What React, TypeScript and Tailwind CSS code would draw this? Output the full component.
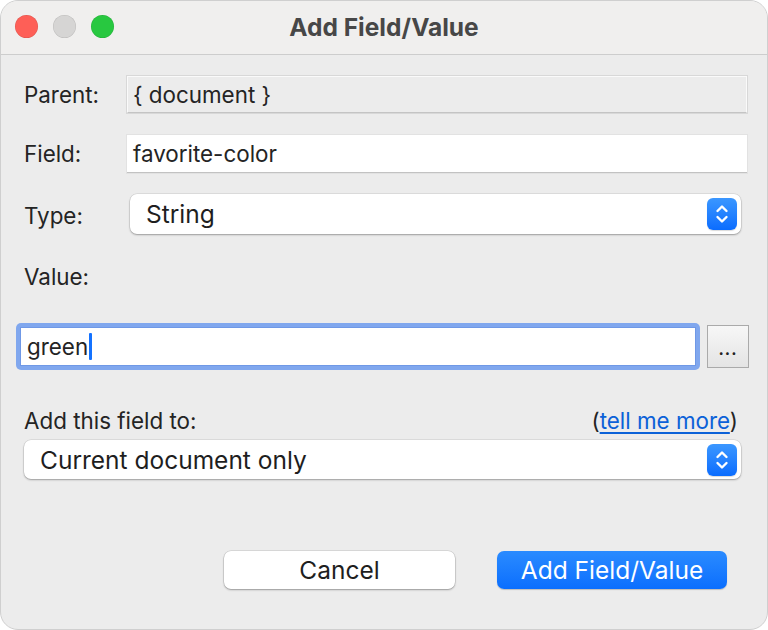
import React from 'react';

function Stepper() {
  return (
    <div className="flex h-[32px] w-[30px] items-center justify-center rounded-[6px] bg-gradient-to-b from-[#3b97ff] to-[#0a6cfe] shadow-[0_1px_1px_rgba(0,0,0,0.15)]">
      <svg width="14" height="22" viewBox="0 0 14 22" fill="none" stroke="white" strokeWidth="2.4" strokeLinecap="round" strokeLinejoin="round">
        <path d="M2.5 8 L7 3.5 L11.5 8" />
        <path d="M2.5 14 L7 18.5 L11.5 14" />
      </svg>
    </div>
  );
}

function PopUp({ label, className }: { label: string; className: string }) {
  return (
    <div
      className={`flex items-center justify-between rounded-[7px] bg-white pr-[4px] shadow-[0_0_0_0.5px_rgba(0,0,0,0.12),0_1px_2px_rgba(0,0,0,0.3)] ${className}`}
    >
      <span className="text-[24.5px] text-[#1e1e1e]">{label}</span>
      <Stepper />
    </div>
  );
}

export default function App() {
  return (
    <div className="h-[630px] w-[768px] bg-white" style={{ fontFamily: 'Inter, "Noto Sans", sans-serif' }}>
      <div className="flex h-[630px] w-[768px] flex-col overflow-hidden rounded-[18px] border border-[#cfcfcf] bg-[#ececec]">
        {/* Title bar */}
        <div className="relative flex h-[54px] shrink-0 items-center justify-center border-b border-[#cdcdcd] bg-[#f0efee]">
          <div className="absolute left-[14px] top-[14px] flex gap-[15px]">
            <span className="h-[23px] w-[23px] rounded-full bg-[#fe5f57] shadow-[inset_0_0_0_0.5px_rgba(0,0,0,0.12)]" />
            <span className="h-[23px] w-[23px] rounded-full bg-[#d6d5d4] shadow-[inset_0_0_0_0.5px_rgba(0,0,0,0.12)]" />
            <span className="h-[23px] w-[23px] rounded-full bg-[#28c840] shadow-[inset_0_0_0_0.5px_rgba(0,0,0,0.12)]" />
          </div>
          <span className="text-[24.5px] font-bold text-[#474747]">Add Field/Value</span>
        </div>

        {/* Body */}
        <div className="flex flex-col px-[20px] pt-[21px] text-[22.4px] leading-[28px] text-[#242424]">
          <div className="grid grid-cols-[106px_1fr] items-center">
            <span className="pl-[3px]">Parent:</span>
            <div className="flex h-[37px] items-center border border-[#fafafa] border-b-[#c4c4c4] bg-[#ececec] pl-[5px] shadow-[0_0_0_1px_#d8d8d8]">
              { '{ document }' }
            </div>
          </div>

          <div className="mt-[22px] grid grid-cols-[106px_1fr] items-center">
            <span className="pl-[3px]">Field:</span>
            <div className="flex h-[38px] items-center border-b border-[#c2c2c2] bg-white pl-[6px] shadow-[0_0_0_1px_#e2e2e2]">
              favorite-color
            </div>
          </div>

          <div className="mt-[21px] grid grid-cols-[109px_1fr] items-center">
            <span className="pl-[3px] pt-[4px]">Type:</span>
            <PopUp label="String" className="mr-[6px] h-[40px] pl-[16px]" />
          </div>

          <div className="mt-[29px] pl-[3px]">Value:</div>

          <div className="mt-[32px] mr-[-2px] flex items-center">
            <div className="ml-[-5px] flex-1 rounded-[5px] bg-[#80a7ee] p-[4px]">
              <div className="flex h-[39px] items-center bg-white pl-[7px] shadow-[inset_0_0_0_1px_#6f98e6]">
                <span>green</span>
                <span className="ml-[1px] h-[27px] w-[3px] rounded-[1px] bg-[#1472ff]" />
              </div>
            </div>
            <div className="ml-[7px] flex h-[43px] w-[42px] items-end justify-center border border-[#aaaaaa] bg-gradient-to-b from-[#f7f7f7] to-[#e4e4e4] pb-[10px]">
              <span className="text-[16px] leading-none font-bold tracking-[1px] text-[#222]">...</span>
            </div>
          </div>

          <div className="mt-[37px] flex items-center justify-between pl-[3px] pr-[9px]">
            <span>Add this field to:</span>
            <span>
              (<span className="text-[#0b61d8] underline decoration-[1.5px] underline-offset-[3px]">tell me more</span>)
            </span>
          </div>

          <PopUp label="Current document only" className="mr-[6px] ml-[3px] mt-[5px] h-[39px] pl-[16px]" />

          <div className="mt-[72px] flex justify-end gap-[42px] pr-[20px]">
            <button className="flex h-[38px] w-[231px] items-center justify-center rounded-[7px] bg-white text-[24.5px] text-[#1e1e1e] shadow-[0_0_0_0.5px_rgba(0,0,0,0.15),0_1px_2px_rgba(0,0,0,0.3)]">
              Cancel
            </button>
            <button className="flex h-[38px] w-[230px] items-center justify-center rounded-[7px] bg-gradient-to-b from-[#2a8bff] to-[#0a6efe] text-[24.5px] text-white shadow-[0_1px_1px_rgba(0,0,0,0.2)]">
              Add Field/Value
            </button>
          </div>
        </div>
      </div>
    </div>
  );
}
